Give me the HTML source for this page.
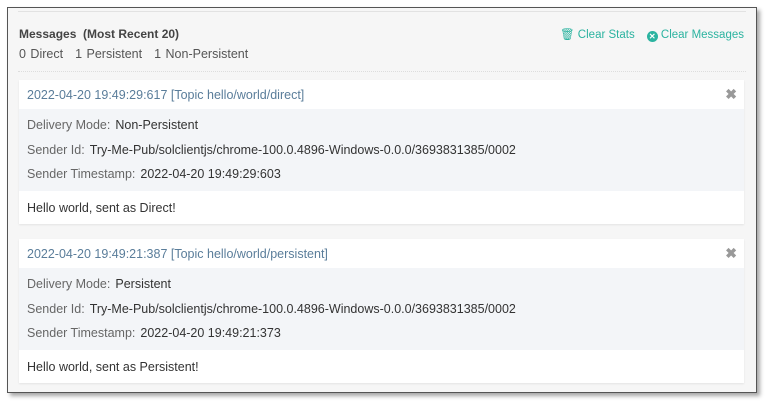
<!DOCTYPE html>
<html><head><meta charset="utf-8"><style>
*{box-sizing:border-box;margin:0;padding:0}
body{width:768px;height:403px;background:#fff;font-family:"Liberation Sans",sans-serif;position:relative;overflow:hidden}
.frame{position:absolute;left:7px;top:7px;width:750px;height:386px;border:1px solid #555;background:#f6f6f6;box-shadow:3px 3px 4px rgba(0,0,0,.35)}
.topline{position:absolute;left:10px;right:10px;top:3px;border-top:1px solid #e2e2e2}
.title{position:absolute;left:11px;top:19px;font-size:12px;color:#444;font-weight:bold}
.stats{position:absolute;left:11px;top:39px;font-size:12.5px;color:#555;word-spacing:1px}
.stats span{margin-right:12px}
.acts{position:absolute;right:12px;top:19px;font-size:11.5px;color:#2bb3a0;white-space:nowrap}
.acts span.a{margin-left:12px}
.ci{display:inline-block;width:11px;height:11px;border-radius:50%;background:#2bb3a0;color:#fff;font-size:8px;line-height:11px;text-align:center;vertical-align:-1px;font-weight:bold}
.sep{position:absolute;left:10px;right:10px;top:63px;border-top:1px dotted #ddd}
.card{position:absolute;left:11px;width:725px;background:#fff;box-shadow:0 1px 2px rgba(0,0,0,.08)}
.hd{height:29px;padding:8px 8px;font-size:12.5px;color:#5a7d9a;position:relative}
.hd .x{position:absolute;right:7px;top:6px;font-size:14px;color:#999;font-weight:bold}
.dt{background:#f3f5f8;padding:4px 8px;height:82px}
.dt div{font-size:12.5px;color:#666;height:24.5px;line-height:24px}
.dt b{font-weight:normal;color:#333;margin-left:5px}
.bd{height:33px;padding:10px 8px;font-size:12.5px;color:#333}
</style></head><body>
<div class="frame">
<div class="topline"></div>
<div class="title">Messages &nbsp;(Most Recent 20)</div>
<div class="stats"><span>0 Direct</span><span>1 Persistent</span><span>1 Non-Persistent</span></div>
<div class="acts"><span class="a">&#128465; Clear Stats</span><span class="a"><span class="ci">✕</span> Clear Messages</span></div>
<div class="sep"></div>
<div class="card" style="top:72px">
<div class="hd">2022-04-20 19:49:29:617 [Topic hello/world/direct]<span class="x">✖</span></div>
<div class="dt"><div>Delivery Mode:<b>Non-Persistent</b></div><div>Sender Id:<b>Try-Me-Pub/solclientjs/chrome-100.0.4896-Windows-0.0.0/3693831385/0002</b></div><div>Sender Timestamp:<b>2022-04-20 19:49:29:603</b></div></div>
<div class="bd">Hello world, sent as Direct!</div>
</div>
<div class="card" style="top:231px">
<div class="hd">2022-04-20 19:49:21:387 [Topic hello/world/persistent]<span class="x">✖</span></div>
<div class="dt"><div>Delivery Mode:<b>Persistent</b></div><div>Sender Id:<b>Try-Me-Pub/solclientjs/chrome-100.0.4896-Windows-0.0.0/3693831385/0002</b></div><div>Sender Timestamp:<b>2022-04-20 19:49:21:373</b></div></div>
<div class="bd">Hello world, sent as Persistent!</div>
</div>
</div>
</body></html>
